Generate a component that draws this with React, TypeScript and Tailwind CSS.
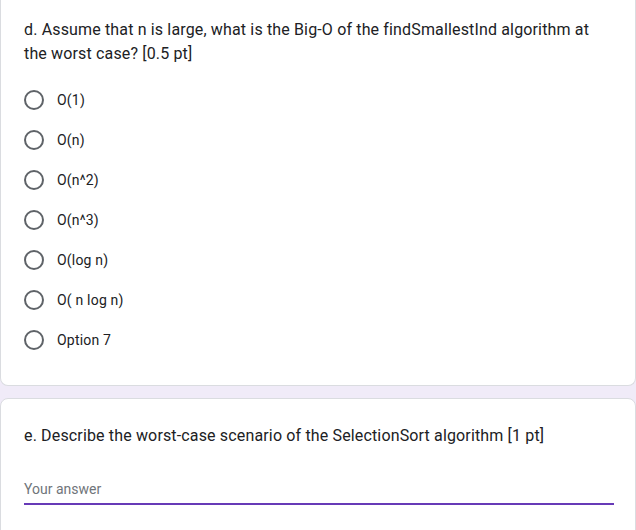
import React from "react";

const options = ["O(1)", "O(n)", "O(n^2)", "O(n^3)", "O(log n)", "O( n log n)", "Option 7"];

export default function App() {
  return (
    <div className="w-[636px] h-[530px] overflow-hidden bg-[#f0ebf8]" style={{ fontFamily: "Roboto, 'Liberation Sans', sans-serif" }}>
      <div className="bg-white border-x border-b border-[#dadce0] rounded-b-lg pt-[18px] pb-[25px] px-[23px]">
        <div className="text-[16px] leading-[24px] text-[#202124] tracking-[0.15px] w-[575px]">
          d. Assume that n is large, what is the Big-O of the findSmallestInd algorithm at the worst case? [0.5 pt]
        </div>
        <div className="mt-[14px] flex flex-col">
          {options.map((o) => (
            <div key={o} className="h-[40px] flex items-center">
              <div className="w-[20px] h-[20px] rounded-full border-2 border-[#5f6368] mr-[13px] shrink-0" />
              <span className="text-[14px] text-[#202124] tracking-[0.2px]">{o}</span>
            </div>
          ))}
        </div>
      </div>
      <div className="mt-[12px] bg-white border border-[#dadce0] rounded-lg pt-[25px] px-[23px] h-[200px]">
        <div className="text-[16px] leading-[24px] text-[#202124] tracking-[0.15px]">
          e. Describe the worst-case scenario of the SelectionSort algorithm [1 pt]
        </div>
        <div className="mt-[29px] w-[590px] border-b-2 border-[#673ab7] pb-[2px]">
          <span className="text-[14px] leading-[20px] text-[#70757a]">Your answer</span>
        </div>
      </div>
    </div>
  );
}
